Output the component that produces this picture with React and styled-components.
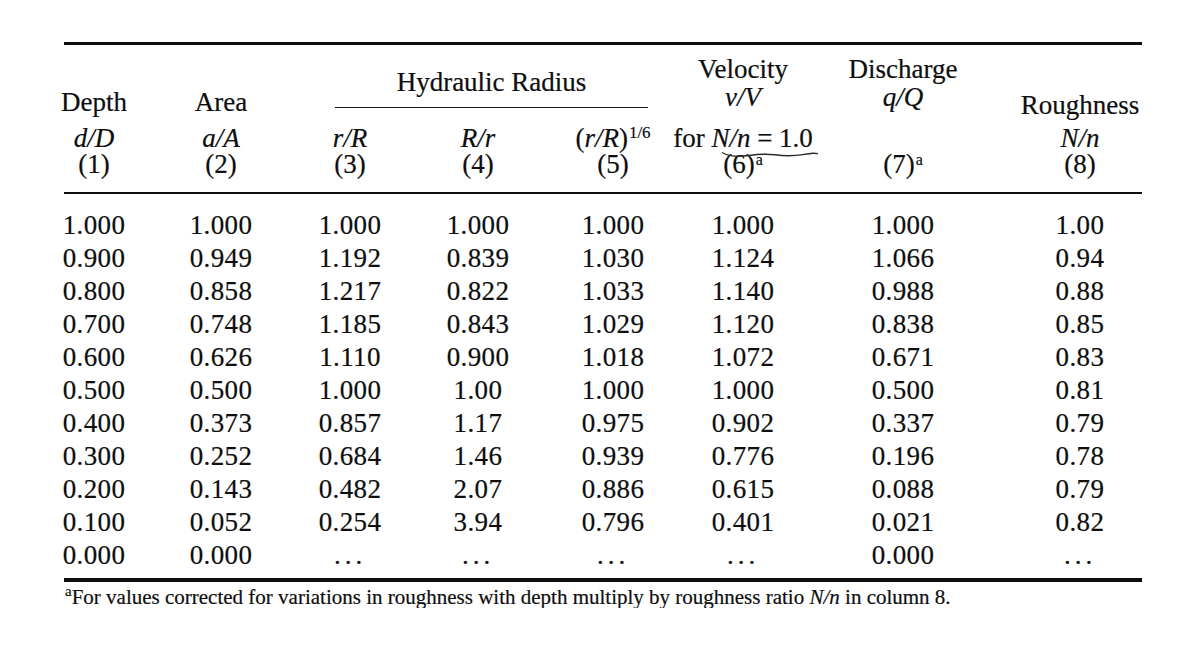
import React from 'react';
import styled, { createGlobalStyle } from 'styled-components';

const COLS = '120px 134px 124px 132px 138px 122px 198px 156px';

const rows = [
  ['1.000', '1.000', '1.000', '1.000', '1.000', '1.000', '1.000', '1.00'],
  ['0.900', '0.949', '1.192', '0.839', '1.030', '1.124', '1.066', '0.94'],
  ['0.800', '0.858', '1.217', '0.822', '1.033', '1.140', '0.988', '0.88'],
  ['0.700', '0.748', '1.185', '0.843', '1.029', '1.120', '0.838', '0.85'],
  ['0.600', '0.626', '1.110', '0.900', '1.018', '1.072', '0.671', '0.83'],
  ['0.500', '0.500', '1.000', '1.00', '1.000', '1.000', '0.500', '0.81'],
  ['0.400', '0.373', '0.857', '1.17', '0.975', '0.902', '0.337', '0.79'],
  ['0.300', '0.252', '0.684', '1.46', '0.939', '0.776', '0.196', '0.78'],
  ['0.200', '0.143', '0.482', '2.07', '0.886', '0.615', '0.088', '0.79'],
  ['0.100', '0.052', '0.254', '3.94', '0.796', '0.401', '0.021', '0.82'],
  ['0.000', '0.000', '...', '...', '...', '...', '0.000', '...'],
];

function App() {
  return (
    <>
      <GlobalStyle />
      <Page>
        <Rule $h={3} />
        <Header>
          <Stack $col="1" $mb={10}>
            <Line>Depth</Line>
          </Stack>
          <Stack $col="2" $mb={10}>
            <Line>Area</Line>
          </Stack>
          <Group>
            <Line>Hydraulic Radius</Line>
            <ThinRule />
          </Group>
          <Stack $col="6" $mb={15} $gap={2}>
            <Line>Velocity</Line>
            <Line><I>v/V</I></Line>
          </Stack>
          <Stack $col="7" $mb={15} $gap={2}>
            <Line>Discharge</Line>
            <Line><I>q/Q</I></Line>
          </Stack>
          <Stack $col="8" $mb={7}>
            <Line>Roughness</Line>
          </Stack>

          <Label $col="1" $row="2"><span><I>d/D</I></span></Label>
          <Label $col="2" $row="2"><span><I>a/A</I></span></Label>
          <Label $col="3" $row="2"><span><I>r/R</I></span></Label>
          <Label $col="4" $row="2"><span><I>R/r</I></span></Label>
          <Label $col="5" $row="2">
            <span>(<I>r/R</I>)<Sup $size={17}>1/6</Sup></span>
          </Label>
          <Label $col="6" $row="2">
            <Marked>
              for <I>N/n</I> = 1.0
              <PenMark viewBox="0 0 98 10" aria-hidden="true">
                <path d="M1 3.5 C 8 7.5, 18 8, 28 6.5 S 44 4.5, 54 5.8 S 72 7.2, 82 5.6 S 92 4, 97 4.6" />
              </PenMark>
            </Marked>
          </Label>
          <Label $col="8" $row="2"><span><I>N/n</I></span></Label>

          <Label $col="1" $row="3"><span>(1)</span></Label>
          <Label $col="2" $row="3"><span>(2)</span></Label>
          <Label $col="3" $row="3"><span>(3)</span></Label>
          <Label $col="4" $row="3"><span>(4)</span></Label>
          <Label $col="5" $row="3"><span>(5)</span></Label>
          <Label $col="6" $row="3"><span>(6)<Sup $size={16}>a</Sup></span></Label>
          <Label $col="7" $row="3"><span>(7)<Sup $size={16}>a</Sup></span></Label>
          <Label $col="8" $row="3"><span>(8)</span></Label>
        </Header>
        <Rule $h={2} />
        <Body>
          {rows.map((row, i) =>
            row.map((v, j) => (
              <Value key={i + '-' + j} $dots={v === '...'}>{v}</Value>
            ))
          )}
        </Body>
        <Rule $h={4} />
        <Footnote>
          <Sup $size={15}>a</Sup>For values corrected for variations in roughness with depth multiply by roughness ratio <I>N/n</I> in column 8.
        </Footnote>
      </Page>
    </>
  );
}

const GlobalStyle = createGlobalStyle`
  body {
    margin: 0;
    background: #ffffff;
  }
`;

const Page = styled.div`
  width: 1078px;
  padding: 42px 0 0 64px;
  font-family: "Liberation Serif", "Times New Roman", serif;
  font-size: 27px;
  color: #0e0e0e;
  -webkit-text-stroke: 0.2px #0e0e0e;
`;

const Rule = styled.div`
  height: ${p => p.$h}px;
  background: #0e0e0e;
`;

const ThinRule = styled.div`
  height: 1.5px;
  margin-top: 12px;
  background: #1c1c1c;
`;

const Header = styled.div`
  display: grid;
  grid-template-columns: ${COLS};
  grid-template-rows: 80.4px 26px 26px;
  margin-left: -30px;
  padding-bottom: 14.6px;
`;

const Stack = styled.div`
  grid-column: ${p => p.$col};
  grid-row: 1;
  display: flex;
  flex-direction: column;
  justify-content: flex-end;
  align-items: center;
  gap: ${p => p.$gap || 0}px;
  padding-bottom: ${p => p.$mb}px;
`;

const Group = styled.div`
  grid-column: 3 / 6;
  grid-row: 1;
  display: flex;
  flex-direction: column;
  justify-content: flex-end;
  align-items: stretch;
  text-align: center;
  padding: 0 34px 17px 47px;
`;

const Line = styled.div`
  line-height: 26px;
  white-space: nowrap;
  text-align: center;
`;

const Label = styled.div`
  grid-column: ${p => p.$col};
  grid-row: ${p => p.$row};
  display: flex;
  justify-content: center;
  line-height: 26px;
  white-space: nowrap;
`;

const Marked = styled.span`
  position: relative;
`;

const PenMark = styled.svg`
  position: absolute;
  left: 48px;
  top: 24px;
  width: 98px;
  height: 10px;
  overflow: visible;

  path {
    fill: none;
    stroke: #2a2a2a;
    stroke-width: 1.4;
  }
`;

const I = styled.i`
  font-style: italic;
`;

const Sup = styled.sup`
  font-size: ${p => p.$size}px;
  line-height: 0;
  vertical-align: 0.55em;
  margin-left: 1px;
`;

const Body = styled.div`
  display: grid;
  grid-template-columns: ${COLS};
  grid-auto-rows: 33px;
  margin-left: -30px;
  padding: 15.4px 0 5.6px;
  line-height: 33px;
`;

const Value = styled.div`
  display: flex;
  justify-content: center;
  white-space: nowrap;
  letter-spacing: ${p => (p.$dots ? '4px' : '0.4px')};
`;

const Footnote = styled.p`
  margin: 0;
  padding-top: 4px;
  font-size: 21px;
  line-height: 22px;
`;

export default App;
